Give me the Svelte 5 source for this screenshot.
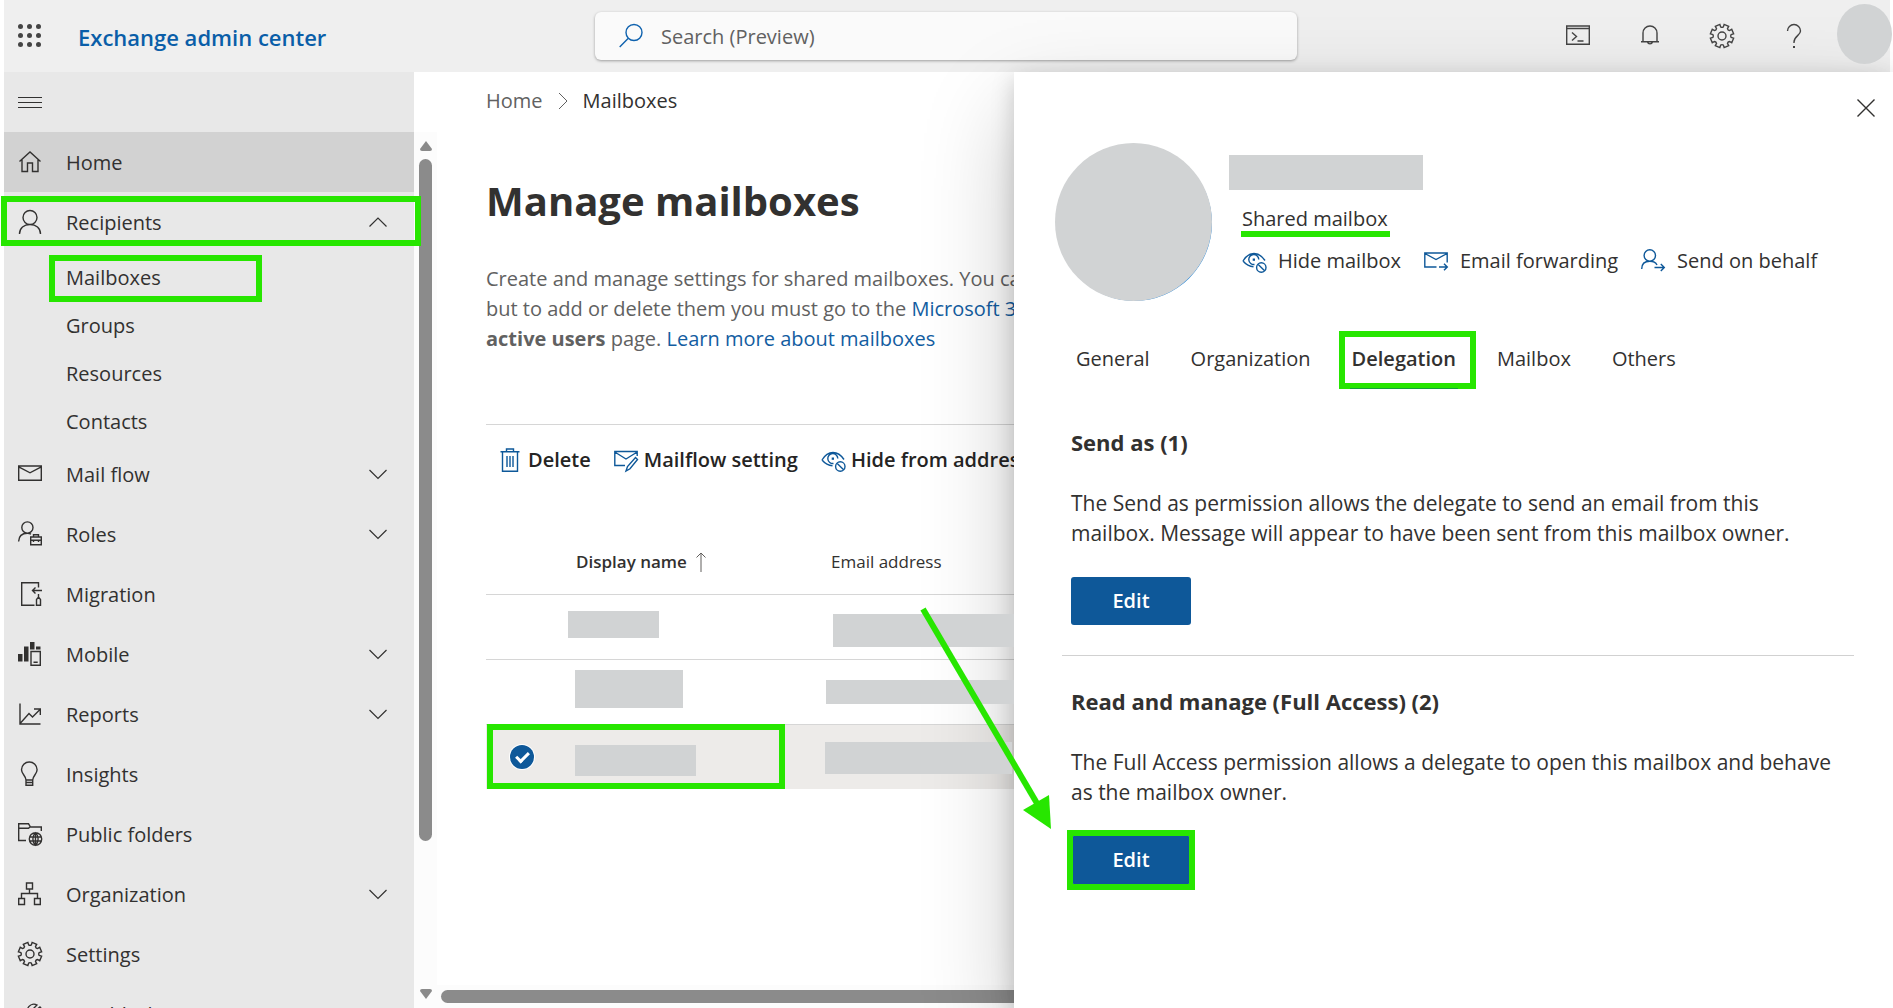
<script>
  // Builds the outline of an eight-toothed gear centred on (12, 12).
  function gearPath() {
    const pts = [];
    const at = (r, deg) => {
      const a = (deg * Math.PI) / 180;
      return `${(12 + r * Math.cos(a)).toFixed(2)} ${(12 + r * Math.sin(a)).toFixed(2)}`;
    };
    for (let i = 0; i < 8; i++) {
      const c = i * 45 + 22.5;
      pts.push(`${i ? 'L' : 'M'}${at(9.2, c - 14)}`, `L${at(11.8, c - 12)}`, `L${at(11.8, c + 12)}`, `L${at(9.2, c + 14)}`, `Q${at(8.2, c + 22.5)} ${at(9.2, c + 31)}`);
    }
    return pts.join('') + 'Z M16 12a4 4 0 1 1-8 0a4 4 0 1 1 8 0Z';
  }

  const eye = 'M1 12C4 7 7.500 4.500 12 4.500S20 7 23 11.500M1 12C4 15.500 7 17.500 11.500 17.800M12.500 15.500A5 5 0 1 1 16.800 10.500M24 18.500a4.700 4.700 0 1 1-9.400 0a4.700 4.700 0 1 1 9.400 0ZM16 15.200L22.600 21.800';

  const icons = {
    home: { s: 'M1.500 11.500L12 2L22.500 11.500M4 9.500V21.500H9.500V13H14.500V21.500H20V9.500' },
    person: { s: 'M19 7.500a7 7 0 1 1-14 0a7 7 0 1 1 14 0ZM1.500 24C1.500 18 6 14.500 12 14.500S22.500 18 22.500 24' },
    mail: { s: 'M.7 4H23.300V18.300H.7ZM.7 4.800L12 10.800L23.300 4.800' },
    roles: { s: 'M15 5.500a5.600 5.600 0 1 1-11.200 0a5.600 5.600 0 1 1 11.200 0ZM.6 19.500C.8 14.500 4 11.300 9.400 11.300Q11.500 11.300 13 12M12.700 15H23.300V22.700H12.700ZM15.500 15V12.700H20.500V15M12.700 18.300H23.300M15.500 17.500V20M20.500 17.500V20' },
    migration: { s: 'M20.500 5.500V.7H3.700V23.300H16.500M24 8.500H14.500M17.500 5.500L14.500 8.500L17.500 11.500M20.500 12V15M18.500 23.300V17.500L20.500 15L22.500 17.500V23.300Z' },
    mobile: { s: 'M13 9.500H22.300V23.300H13ZM15.500 20.300H19.700', f: 'M0 12H4.500V19.500H0ZM6 4.500H10.500V19.500H6ZM12 0H16.500V7.500H12ZM18 4.500H22.500V7.500H18Z' },
    reports: { s: 'M2 1.500V22H22.500M2.500 21L11 11.500L14.500 15L22 7.500M16 7H22.300V13' },
    bulb: { s: 'M8 18C8 14 3.500 12 3.500 7.800a7.800 7.800 0 0 1 15.600 0C19.100 12 14.700 14 14.700 18ZM8 18V23.300H14.700V18M8 20.500H14.700' },
    folder: { s: 'M8 18.500H.7V1.800H10.500L12.500 5H23.300V9M.7 6.300H10.500L12.500 4.500M23.700 17a6.200 6.200 0 1 1-12.400 0a6.200 6.200 0 1 1 12.400 0ZM11.500 15H23.500M11.500 19H23.500M17.500 10.800C14 14 14 20 17.500 23.200C21 20 21 14 17.500 10.800ZM17.500 10.800V23.200' },
    org: { s: 'M8.500 1H14.500V7H8.500ZM11.500 7V11.500M3.500 16.500V11.500H19.500V16.500M.7 16.500H6.500V22.500H.7ZM16.500 16.500H22.300V22.500H16.500Z' },
    gear: { s: gearPath() },
    wrench: { s: 'M2 22L11 13A6.500 6.500 0 0 1 19 3L15.500 6.500L17.500 8.500L22 5A6.500 6.500 0 0 1 13 14.500L4.500 23' },
    terminal: { s: 'M.7 2H23.300V20.300H.7ZM.7 4.500H23.300M6 8.500L10.500 12.500L6 16.500M11.500 17H17.500' },
    bell: { s: 'M5 17.500V9a7 7 0 0 1 14 0V17.500M3 17.800H21M9.500 18a2.600 2.600 0 0 0 5 0' },
    help: { s: 'M5.500 7A6.500 6.500 0 0 1 18.500 7C18.500 11.500 12 12 12 18V19', f: 'M11 22H13V24H11Z' },
    search: { s: 'M23 8.500a8 8 0 1 1-16 0a8 8 0 1 1 16 0ZM9.300 14.200L.7 23' },
    close: { s: 'M3.500 3.500L20.500 20.500M20.500 3.500L3.500 20.500' },
    trash: { s: 'M2.500 3.700H21.500M8.500 3.500V1H15.500V3.500M4.500 4V23.200H19.500V4M9 8V19M12 8V19M15 8V19' },
    mailEdit: { s: 'M11 17.500H.8V3.500H23.200V8M.8 4L12 11L23.200 4M12 23L13.500 18.500L21.500 9.500L23.500 11.500L16 20.800Z' },
    eye: { s: eye, f: 'M10.700 9.500H13V11.800H10.700Z' },
    mailSend: { s: 'M12.500 18H.8V4H23.200V13.500M.8 4.500L12 10.500L23.200 4.500M15 18H23.500M20 14.700L23.300 18L20 21.300' },
    personSend: { s: 'M14.500 6.500a5.700 5.700 0 1 1-11.400 0a5.700 5.700 0 1 1 11.400 0ZM.7 20C.7 15 4 12.300 8.800 12.300C12.500 12.300 15 14 16 16M13.500 18.500H23.300M19.800 15L23.300 18.500L19.800 22' },
    up: { s: 'M3.500 16.500L12 8L20.500 16.500' },
    down: { s: 'M3.500 8L12 16.500L20.500 8' },
    right: { s: 'M8 4L16 12L8 20' }
  };

  const nav = [
    { label: 'Home', icon: 'home', current: true },
    { label: 'Recipients', icon: 'person', chevron: 'up', children: ['Mailboxes', 'Groups', 'Resources', 'Contacts'] },
    { label: 'Mail flow', icon: 'mail', chevron: 'down' },
    { label: 'Roles', icon: 'roles', chevron: 'down' },
    { label: 'Migration', icon: 'migration' },
    { label: 'Mobile', icon: 'mobile', chevron: 'down' },
    { label: 'Reports', icon: 'reports', chevron: 'down' },
    { label: 'Insights', icon: 'bulb' },
    { label: 'Public folders', icon: 'folder' },
    { label: 'Organization', icon: 'org', chevron: 'down' },
    { label: 'Settings', icon: 'gear' },
    { label: 'Troubleshoot', icon: 'wrench' }
  ];

  // Redaction blocks: left, top, width and height inside their cell.
  const rows = [
    { name: [-8, 16, 91, 27], mail: [2, 19, 182, 33] },
    { name: [-1, 10, 108, 38], mail: [-5, 20, 189, 24] },
    { name: [-1, 20, 121, 31], mail: [-6, 17, 187, 32], selected: true }
  ];

  const actions = [
    { label: 'Hide mailbox', icon: 'eye' },
    { label: 'Email forwarding', icon: 'mailSend' },
    { label: 'Send on behalf', icon: 'personSend' }
  ];
  const tabs = ['General', 'Organization', 'Delegation', 'Mailbox', 'Others'];
</script>

{#snippet icon(name)}
  <svg class="icon" viewBox="0 0 24 24" aria-hidden="true">
    <path d={icons[name].s} />
    {#if icons[name].f}<path class="solid" d={icons[name].f} />{/if}
  </svg>
{/snippet}

{#snippet redacted([x, y, w, h])}
  <span class="redacted" style="left:{x}px;top:{y}px;width:{w}px;height:{h}px"></span>
{/snippet}

<div class="page">
  <header class="topbar">
    <button class="plain waffle" aria-label="App launcher">
      {#each Array(9) as _}<i></i>{/each}
    </button>
    <a class="brand" href="#home">Exchange admin center</a>
    <label class="search">
      {@render icon('search')}
      <input type="text" placeholder="Search (Preview)" aria-label="Search" />
    </label>
    <div class="tools">
      <button class="plain" aria-label="Shell">{@render icon('terminal')}</button>
      <button class="plain" aria-label="Notifications">{@render icon('bell')}</button>
      <button class="plain" aria-label="Settings">{@render icon('gear')}</button>
      <button class="plain" aria-label="Help">{@render icon('help')}</button>
    </div>
    <span class="account"></span>
  </header>

  <div class="body">
    <nav class="sidebar">
      <button class="plain burger" aria-label="Collapse navigation"><i></i><i></i><i></i></button>
      <ul>
        {#each nav as item}
          <li>
            <a class="item" class:current={item.current} class:marked={item.children} href="#{item.icon}">
              {@render icon(item.icon)}
              <span class="label">{item.label}</span>
              {#if item.chevron}{@render icon(item.chevron)}{/if}
            </a>
            {#if item.children}
              <ul class="sub">
                {#each item.children as child, i}
                  <li><a class:marked={i === 0} href="#{child}">{child}</a></li>
                {/each}
              </ul>
            {/if}
          </li>
        {/each}
      </ul>
    </nav>

    <div class="vscroll">
      <svg class="tip" viewBox="0 0 12 10" aria-hidden="true"><path d="M6 0L12 8Q12 10 10 10H2Q0 10 0 8Z" /></svg>
      <div class="track"><div class="thumb"></div></div>
      <svg class="tip" viewBox="0 0 12 10" aria-hidden="true"><path d="M6 10L12 2Q12 0 10 0H2Q0 0 0 2Z" /></svg>
    </div>

    <main>
      <div class="content">
        <div class="crumbs"><a href="#home">Home</a>{@render icon('right')}<span>Mailboxes</span></div>
        <h1>Manage mailboxes</h1>
        <p class="intro">
          Create and manage settings for shared mailboxes. You can<br />
          but to add or delete them you must go to the <a href="#m365">Microsoft 365</a><br />
          <b>active users</b> page. <a href="#learn">Learn more about mailboxes</a>
        </p>
        <div class="commands">
          <button class="plain">{@render icon('trash')}Delete</button>
          <button class="plain">{@render icon('mailEdit')}Mailflow setting</button>
          <button class="plain">{@render icon('eye')}Hide from address</button>
        </div>
        <table>
          <thead>
            <tr>
              <th class="pick"></th>
              <th class="name">
                <span class="sort">Display name
                  <svg viewBox="0 0 12 20" aria-hidden="true"><path d="M6 20V1M1.500 5.500L6 1L10.500 5.500" /></svg>
                </span>
              </th>
              <th class="mail">Email address</th>
            </tr>
          </thead>
          <tbody>
            {#each rows as row}
              <tr class:selected={row.selected}>
                <td class="pick">
                  {#if row.selected}
                    <input type="checkbox" checked aria-label="Select mailbox" />
                    <span class="rowmark"></span>
                  {/if}
                </td>
                <td>{@render redacted(row.name)}</td>
                <td>{@render redacted(row.mail)}</td>
              </tr>
            {/each}
          </tbody>
        </table>
      </div>
      <div class="hscroll"><div class="thumb"></div></div>
    </main>

    <aside class="panel">
      <button class="plain close" aria-label="Close">{@render icon('close')}</button>
      <div class="profile">
        <div class="photo"></div>
        <div class="who">
          <div class="who-name"></div>
          <div class="kind">Shared mailbox</div>
          <div class="actions">
            {#each actions as a}
              <button class="plain">{@render icon(a.icon)}{a.label}</button>
            {/each}
          </div>
        </div>
      </div>
      <div class="tabs" role="tablist">
        {#each tabs as tab}
          <button class="plain" role="tab" aria-selected={tab === 'Delegation'} class:active={tab === 'Delegation'}>{tab}</button>
        {/each}
      </div>
      <section>
        <h2>Send as (1)</h2>
        <p>The Send as permission allows the delegate to send an email from this mailbox. Message will appear to have been sent from this mailbox owner.</p>
        <button class="edit">Edit</button>
      </section>
      <hr />
      <section>
        <h2>Read and manage (Full Access) (2)</h2>
        <p>The Full Access permission allows a delegate to open this mailbox and behave as the mailbox owner.</p>
        <button class="edit marked">Edit</button>
      </section>
    </aside>

    <svg class="arrow" viewBox="0 0 134 224" aria-hidden="true">
      <path class="shaft" d="M3 2L118 198" />
      <path class="head" d="M131 222L103 203L129 188Z" />
    </svg>
  </div>
</div>

<style>
  :global(body) {
    background: #fff;
  }
  .page {
    --green: #27e600;
    --blue: #0e5899;
    --grey: #d1d3d4;
    height: 100vh;
    overflow: hidden;
    display: flex;
    flex-direction: column;
    position: relative;
    padding-left: 4px;
    box-sizing: border-box;
    font: 20px/30px 'Open Sans', 'Noto Sans', sans-serif;
    color: #323130;
  }
  a {
    color: inherit;
    text-decoration: none;
  }
  ul {
    list-style: none;
    margin: 0;
    padding: 0;
  }
  .plain {
    border: 0;
    background: none;
    padding: 0;
    font: inherit;
    color: inherit;
    display: flex;
    align-items: center;
    white-space: nowrap;
  }
  .icon {
    width: 24px;
    height: 24px;
    flex: none;
    overflow: visible;
    fill: none;
    stroke: currentColor;
    stroke-width: 1.4;
  }
  .icon .solid {
    fill: currentColor;
    stroke: none;
  }

  .topbar {
    flex: 0 0 72px;
    display: flex;
    align-items: center;
    background: #efefef;
    margin-right: 3px;
    padding-left: 14px;
  }
  .waffle {
    display: grid;
    grid-template-columns: repeat(3, 5px);
    gap: 4px;
    margin-bottom: 2px;
  }
  .waffle i {
    height: 5px;
    border-radius: 50%;
    background: #444;
  }
  .brand {
    flex: 0 1 517px;
    margin-left: 37px;
    padding-top: 2px;
    font-size: 22px;
    font-weight: 600;
    color: #0a5ea8;
    white-space: nowrap;
  }
  .search {
    flex: 0 1 702px;
    height: 48px;
    box-sizing: border-box;
    display: flex;
    align-items: center;
    gap: 18px;
    padding: 0 24px;
    background: #fafafa;
    border-radius: 6px;
    box-shadow: 0 1px 3px rgba(0, 0, 0, 0.35);
    color: #0f62ae;
  }
  .search input {
    flex: 1;
    min-width: 0;
    border: 0;
    padding: 2px 0 0;
    background: none;
    font: inherit;
    outline: 0;
  }
  .search input::placeholder {
    color: #616161;
    opacity: 1;
  }
  .tools {
    display: flex;
    gap: 48px;
    margin-left: auto;
    color: #444;
  }
  .account {
    flex: none;
    width: 55px;
    height: 60px;
    border-radius: 50%;
    background: var(--grey);
    margin: 0 -2px 4px 31px;
    position: relative;
    z-index: 3;
  }

  .body {
    flex: 1;
    min-height: 0;
    display: flex;
    position: relative;
  }
  .sidebar {
    flex: 0 0 410px;
    background: #e8e8e8;
  }
  .burger {
    height: 60px;
    width: 52px;
    padding-left: 14px;
    flex-direction: column;
    justify-content: center;
    align-items: flex-start;
    gap: 4px;
  }
  .burger i {
    width: 24px;
    height: 1px;
    background: #323130;
  }
  .item {
    height: 60px;
    display: flex;
    align-items: center;
    padding: 0 24px 0 14px;
    gap: 24px;
    position: relative;
  }
  .item.current {
    background: #d2d2d2;
  }
  .item .label {
    flex: 1;
    padding-top: 2px;
  }
  .item .label + .icon {
    stroke-width: 1.2;
  }
  .sub a {
    height: 48px;
    box-sizing: border-box;
    display: flex;
    align-items: center;
    padding: 4px 0 0 62px;
    position: relative;
  }
  .item.marked::after {
    content: '';
    position: absolute;
    inset: 4px -7px 6px -3px;
    border: 6px solid var(--green);
    z-index: 4;
  }
  .sub .marked::after {
    content: '';
    position: absolute;
    left: 45px;
    top: 3px;
    width: 201px;
    height: 35px;
    border: 6px solid var(--green);
  }

  .vscroll {
    flex: 0 0 23px;
    margin-top: 60px;
    padding: 9px 0 9px;
    box-sizing: border-box;
    background: #fcfcfc;
    display: flex;
    flex-direction: column;
    align-items: center;
    gap: 8px;
  }
  .tip {
    width: 12px;
    height: 10px;
    fill: #8a8a8a;
    flex: none;
  }
  .track {
    flex: 1;
    width: 13px;
  }
  .track .thumb {
    height: 83%;
    border-radius: 7px;
    background: #8b8b8b;
  }

  main {
    flex: 1;
    min-width: 0;
    overflow: hidden;
    display: flex;
    flex-direction: column;
  }
  .content {
    flex: 1;
    padding-left: 49px;
    white-space: nowrap;
  }
  .crumbs {
    display: flex;
    align-items: center;
    gap: 8px;
    margin-top: 14px;
    color: #616161;
  }
  .crumbs .icon {
    stroke-width: 1;
  }
  .crumbs span {
    color: #323130;
  }
  h1 {
    margin: 55px 0 0;
    font-size: 40px;
    line-height: 60px;
    font-weight: 700;
  }
  .intro {
    margin: 33px 0 0;
    color: #616161;
  }
  .intro a {
    color: #135da1;
  }
  .commands {
    display: flex;
    gap: 23px;
    margin-top: 70px;
    padding: 20px 0 0 12px;
    border-top: 1px solid #d6d6d6;
    color: #252423;
  }
  .commands .plain {
    gap: 6px;
    font-weight: 600;
  }
  .commands .icon,
  .actions .icon {
    color: var(--blue);
  }
  table {
    width: 100%;
    margin-top: 55px;
    table-layout: fixed;
    border-collapse: collapse;
  }
  th {
    height: 64px;
    padding: 0;
    text-align: left;
    font-size: 17px;
    font-weight: 400;
  }
  .pick {
    width: 90px;
  }
  th.name {
    width: 255px;
    font-weight: 600;
  }
  .sort {
    display: flex;
    align-items: center;
    gap: 8px;
  }
  .sort svg {
    width: 12px;
    height: 20px;
    fill: none;
    stroke: #605e5c;
  }
  td {
    height: 64px;
    padding: 0;
    border-top: 1px solid #d6d6d6;
    position: relative;
  }
  .selected td {
    background: #edebe9;
  }
  .redacted {
    position: absolute;
    background: var(--grey);
    z-index: 3;
  }
  input[type='checkbox'] {
    appearance: none;
    display: block;
    width: 24px;
    height: 24px;
    margin: 0 0 0 24px;
    border-radius: 50%;
    background: var(--blue);
    box-shadow: 0 0 0 1px #fff;
    position: relative;
  }
  input[type='checkbox']::after {
    content: '';
    position: absolute;
    left: 6px;
    top: 7px;
    width: 10px;
    height: 5px;
    border: solid #fff;
    border-width: 0 0 3px 3px;
    transform: rotate(-45deg);
  }
  .rowmark {
    position: absolute;
    left: 1px;
    top: -1px;
    width: 286px;
    height: 53px;
    border: 6px solid var(--green);
    z-index: 4;
  }
  .hscroll {
    height: 23px;
    box-sizing: border-box;
    padding: 5px 0 5px 4px;
    background: #fcfcfc;
  }
  .hscroll .thumb {
    height: 13px;
    border-radius: 7px 0 0 7px;
    background: #8b8b8b;
  }

  .panel {
    flex: 0 0 879px;
    box-sizing: border-box;
    background: #fff;
    position: relative;
    z-index: 2;
    padding: 0 36px 0 57px;
    box-shadow: 0 38px 86px rgba(0, 0, 0, 0.22), 0 7px 22px rgba(0, 0, 0, 0.18);
  }
  .close {
    margin: 24px -21px 0 auto;
  }
  .profile {
    display: flex;
    margin: 23px 0 0 -16px;
  }
  .photo {
    flex: none;
    width: 157px;
    height: 158px;
    border-radius: 50%;
    background: var(--grey);
    box-shadow: 1px 1px 0 -1px #2b88d8;
  }
  .who {
    padding: 12px 0 0 17px;
  }
  .who-name {
    width: 194px;
    height: 35px;
    background: var(--grey);
  }
  .kind {
    width: max-content;
    margin: 14px 0 0 13px;
    position: relative;
  }
  .kind::after {
    content: '';
    position: absolute;
    left: -1px;
    right: -2px;
    bottom: -3px;
    height: 6px;
    background: var(--green);
  }
  .actions {
    display: flex;
    gap: 23px;
    margin: 12px 0 0 13px;
  }
  .actions .plain {
    gap: 12px;
  }
  .tabs {
    display: flex;
    gap: 41px;
    margin: 43px 0 0 5px;
  }
  .tabs .active {
    font-weight: 600;
    position: relative;
  }
  .tabs .active::before {
    content: '';
    position: absolute;
    inset: auto -2px -15px;
    height: 1px;
    background: #12a33a;
    z-index: 1;
  }
  .tabs .active::after {
    content: '';
    position: absolute;
    inset: -13px -20px -15px -13px;
    border: 6px solid var(--green);
  }
  h2 {
    margin: 0;
    font-size: 22px;
    line-height: 30px;
    font-weight: 700;
  }
  section {
    padding-top: 30px;
  }
  .tabs + section {
    padding-top: 53px;
  }
  section p {
    margin: 31px 0 29px;
    font-size: 21px;
    max-width: 772px;
  }
  .edit {
    width: 120px;
    height: 48px;
    border: 0;
    border-radius: 3px;
    background: var(--blue);
    color: #fff;
    font: inherit;
    font-weight: 600;
    display: block;
    position: relative;
  }
  .edit.marked::after {
    content: '';
    position: absolute;
    inset: -6px -4px;
    border: 6px solid var(--green);
  }
  hr {
    margin: 30px 3px 0 -9px;
    border: 0;
    border-top: 1px solid #d1d1d1;
  }
  .arrow {
    position: absolute;
    right: 839px;
    top: 535px;
    width: 134px;
    height: 224px;
    z-index: 5;
  }
  .shaft {
    stroke: var(--green);
    stroke-width: 6;
    fill: none;
  }
  .head {
    fill: var(--green);
  }
</style>
